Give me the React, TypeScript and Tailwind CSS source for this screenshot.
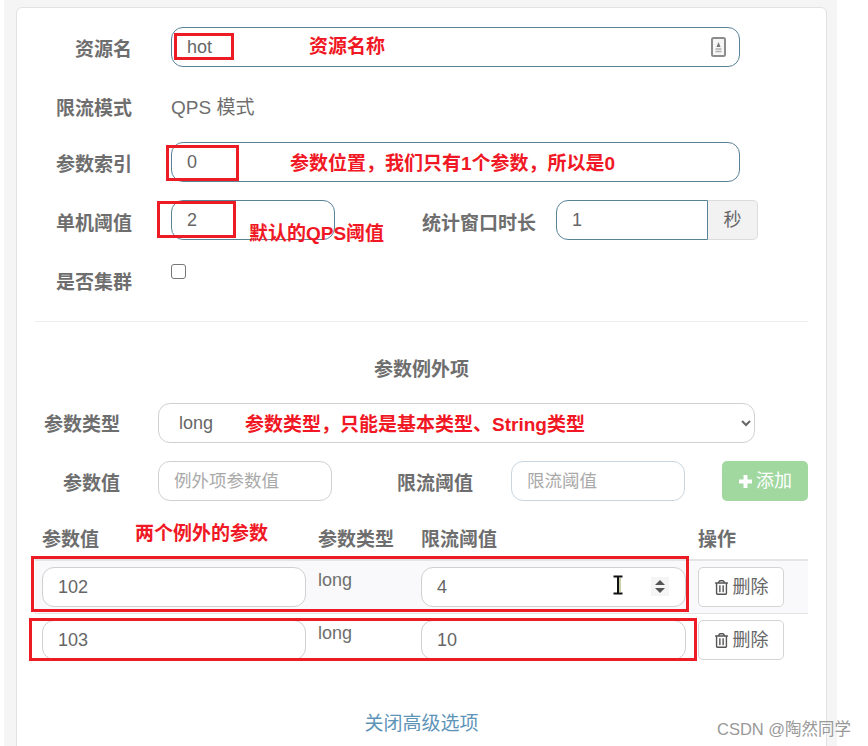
import { FaRegTrashAlt } from "react-icons/fa";

const fieldClass =
  "h-10 rounded-[12px] border bg-white px-[15px] text-[18px] text-[#666] outline-none placeholder:text-[17.5px] placeholder:text-[#a9a9a9]";
const blueBorder = "border-[#5a8297]";
const grayBorder = "border-[#d0d0d0]";

function Label({ children, className = "" }: { children: string; className?: string }) {
  return (
    <label className={`shrink-0 text-right text-[19px] font-bold text-[#6e6e6e] ${className}`}>
      {children}
    </label>
  );
}

function Note({ children, className }: { children: string; className: string }) {
  return (
    <span className={`absolute whitespace-nowrap text-[19px] leading-[24px] font-bold text-[#f01824] ${className}`}>
      {children}
    </span>
  );
}

function RedBox({ className }: { className: string }) {
  return <div className={`pointer-events-none absolute border-[3px] border-[#ed1c24] ${className}`} />;
}

function RowInputs({ value, type, limit, shaded, spinner }: {
  value: string;
  type: string;
  limit: string;
  shaded?: boolean;
  spinner?: boolean;
}) {
  return (
    <div className={`flex h-[53px] border-b pl-[7px] pt-[6px] ${shaded ? "border-[#e4e4e4] bg-[#f9f9fb]" : "border-transparent"}`}>
      <input
        readOnly
        value={value}
        className={`${fieldClass} ${grayBorder} w-[264px]`}
      />
      <span className="ml-3 w-[103px] text-[18px] leading-[26px] text-[#6e6e6e]">{type}</span>
      <div className="relative">
        <input
          readOnly
          value={limit}
          className={`${fieldClass} ${grayBorder} w-[265px]`}
        />
        {spinner && (
          <>
            <svg className="absolute top-[8px] left-[190px]" width="14" height="20" viewBox="0 0 14 20">
              <path d="M7 1.5 V18.5 M2.5 1.5 H11.5 M2.5 18.5 H11.5" stroke="#111" strokeWidth="2" fill="none" />
              <path d="M9 3 V17" stroke="#b9bd8c" strokeWidth="1.5" />
            </svg>
            <div className="absolute top-[10px] left-[230px] flex h-[19px] w-[18px] flex-col items-center justify-center gap-[3px] bg-[#f5f5f5]">
              <div className="h-0 w-0 border-x-[5px] border-b-[5px] border-x-transparent border-b-[#555]" />
              <div className="h-0 w-0 border-x-[5px] border-t-[5px] border-x-transparent border-t-[#555]" />
            </div>
          </>
        )}
      </div>
      <button className="ml-3 flex h-10 w-[86px] items-center justify-center gap-[4px] rounded-[5px] border border-[#d4d4d4] bg-white text-[18px] text-[#666]">
        <FaRegTrashAlt size={15} className="text-[#555]" />
        删除
      </button>
    </div>
  );
}

export default function App() {
  return (
    <div className="relative h-[746px] w-[868px] overflow-hidden bg-white font-['Liberation_Sans','Noto_Sans_CJK_SC',sans-serif]">
      <div className="ml-1 h-full w-[833px] bg-[#f5f5f5] pt-[7px] pl-3 pr-[10px]">
        <div className="h-[760px] rounded-t-[6px] border border-[#e2e2e2] bg-white pt-[19px]">
          <div className="flex h-10">
            <Label className="w-[115px] pt-[9px]">资源名</Label>
            <div className="relative ml-[39px]">
              <input readOnly value="hot" className={`${fieldClass} ${blueBorder} w-[569px]`} />
              <svg className="absolute top-[10px] right-[14px]" width="15" height="20" viewBox="0 0 15 20">
                <rect x="1" y="1" width="13" height="18" rx="1.5" fill="#f6f6f6" stroke="#8c8c8c" strokeWidth="2" />
                <path d="M7.5 5 L9.5 10 H5.5 Z" fill="#777" />
                <path d="M4.5 12 H10.5 M4.5 14.5 H10.5" stroke="#b0b0b0" strokeWidth="1.5" />
              </svg>
            </div>
          </div>

          <div className="mt-[21px] flex h-10 items-center">
            <Label className="w-[115px] pt-[2px]">限流模式</Label>
            <span className="ml-[39px] text-[19px] text-[#6e6e6e]">QPS 模式</span>
          </div>

          <div className="mt-[14px] flex h-10">
            <Label className="w-[115px] pt-[9px]">参数索引</Label>
            <input readOnly value="0" className={`${fieldClass} ${blueBorder} ml-[39px] w-[569px]`} />
          </div>

          <div className="mt-[18px] flex h-10">
            <Label className="w-[115px] pt-[10px]">单机阈值</Label>
            <input readOnly value="2" className={`${fieldClass} ${blueBorder} ml-[39px] w-[164px]`} />
            <Label className="ml-[87px] pt-[10px]">统计窗口时长</Label>
            <div className="ml-[20px] flex">
              <input
                readOnly
                value="1"
                className={`${fieldClass} ${blueBorder} w-[152px] rounded-r-none`}
              />
              <span className="flex h-10 w-[50px] items-center justify-center rounded-r-[5px] border border-l-0 border-[#dcdcdc] bg-[#f2f2f3] text-[18px] text-[#666]">
                秒
              </span>
            </div>
          </div>

          <div className="mt-[22px] flex h-10">
            <Label className="w-[115px] pt-[7px]">是否集群</Label>
            <div className="ml-[39px] pt-[2px]">
              <div className="h-[15px] w-[15px] rounded-[3px] border border-[#767676] bg-white" />
            </div>
          </div>

          <div className="mx-[18px] mt-[19px] border-t border-[#eeeeee]" />

          <h4 className="mt-[35px] text-center text-[19px] leading-[26px] font-bold text-[#6e6e6e]">参数例外项</h4>

          <div className="mt-[20px] flex h-10">
            <Label className="w-[103px] pt-[8px]">参数类型</Label>
            <select
              defaultValue="long"
              className={`${fieldClass} ${grayBorder} ml-[38px] w-[597px] pl-[16px]`}
            >
              <option value="long">long</option>
            </select>
          </div>

          <div className="mt-[18px] flex h-10">
            <Label className="w-[103px] pt-[9px]">参数值</Label>
            <input
              readOnly
              placeholder="例外项参数值"
              className={`${fieldClass} ${grayBorder} ml-[38px] w-[174px]`}
            />
            <Label className="ml-[65px] pt-[9px]">限流阈值</Label>
            <input
              readOnly
              placeholder="限流阈值"
              className={`${fieldClass} border-[#c9d6df] ml-[38px] w-[174px]`}
            />
            <button className="ml-[37px] flex h-10 w-[86px] items-center justify-center gap-[3px] rounded-[5px] bg-[#a0d8a0] text-[18px] text-white">
              <svg width="15" height="15" viewBox="0 0 15 15">
                <path d="M7.5 1 V14 M1 7.5 H14" stroke="#fff" strokeWidth="4" />
              </svg>
              添加
            </button>
          </div>

          <div className="mx-[18px] mt-[22px]">
            <div className="flex h-[38px] border-b-2 border-[#e4e4e4] pl-[7px] pt-[4px] text-[19px] leading-[26px] font-bold text-[#6e6e6e]">
              <span className="w-[276px]">参数值</span>
              <span className="w-[103px]">参数类型</span>
              <span className="w-[277px]">限流阈值</span>
              <span>操作</span>
            </div>
            <RowInputs value="102" type="long" limit="4" shaded spinner />
            <RowInputs value="103" type="long" limit="10" />
          </div>

          <div className="mt-[44px] text-center text-[19px] leading-[26px] text-[#5e94b8]">关闭高级选项</div>
        </div>
      </div>

      <RedBox className="top-[33px] left-[174px] h-[27px] w-[60px]" />
      <RedBox className="top-[145px] left-[166px] h-[36px] w-[73px]" />
      <RedBox className="top-[201px] left-[157px] h-[37px] w-[79px]" />
      <RedBox className="top-[556px] left-[31px] h-[56px] w-[658px]" />
      <RedBox className="top-[618px] left-[29px] h-[43px] w-[668px]" />

      <Note className="top-[35px] left-[309px]">资源名称</Note>
      <Note className="top-[152px] left-[290px]">参数位置，我们只有1个参数，所以是0</Note>
      <Note className="top-[222px] left-[249px]">默认的QPS阈值</Note>
      <Note className="top-[413px] left-[245px]">参数类型，只能是基本类型、String类型</Note>
      <Note className="top-[522px] left-[135px]">两个例外的参数</Note>

      <span className="absolute top-[717px] left-[717px] text-[16.5px] leading-[24px] text-[#999]">CSDN @陶然同学</span>
    </div>
  );
}
